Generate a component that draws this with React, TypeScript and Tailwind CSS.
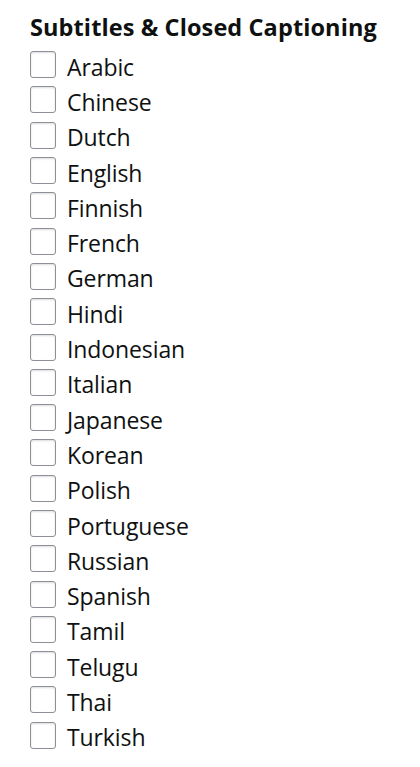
import React from 'react';

const languages = [
  'Arabic',
  'Chinese',
  'Dutch',
  'English',
  'Finnish',
  'French',
  'German',
  'Hindi',
  'Indonesian',
  'Italian',
  'Japanese',
  'Korean',
  'Polish',
  'Portuguese',
  'Russian',
  'Spanish',
  'Tamil',
  'Telugu',
  'Thai',
  'Turkish',
];

const LanguageRow: React.FC<{ label: string }> = ({ label }) => (
  <label className="flex h-[35.3px] items-center gap-[11px] cursor-pointer">
    <input type="checkbox" className="peer sr-only" />
    <span className="h-[27px] w-[26px] shrink-0 rounded-[3px] border border-[#8d9096] bg-white shadow-[inset_0_1px_2px_rgba(15,17,17,0.15)]" />
    <span className="pt-[5px] text-[23px] leading-none tracking-[-0.1px] text-[#0f1111]">{label}</span>
  </label>
);

export default function App() {
  return (
    <div className="min-h-screen bg-white pl-[30px] pt-[12px] font-['Open_Sans',sans-serif]">
      <h2 className="text-[23.5px] font-bold leading-[30px] tracking-[0.1px] text-[#0f1111]">Subtitles &amp; Closed Captioning</h2>
      <div className="mt-[5px] flex flex-col">
        {languages.map((l) => (
          <LanguageRow key={l} label={l} />
        ))}
      </div>
    </div>
  );
}
